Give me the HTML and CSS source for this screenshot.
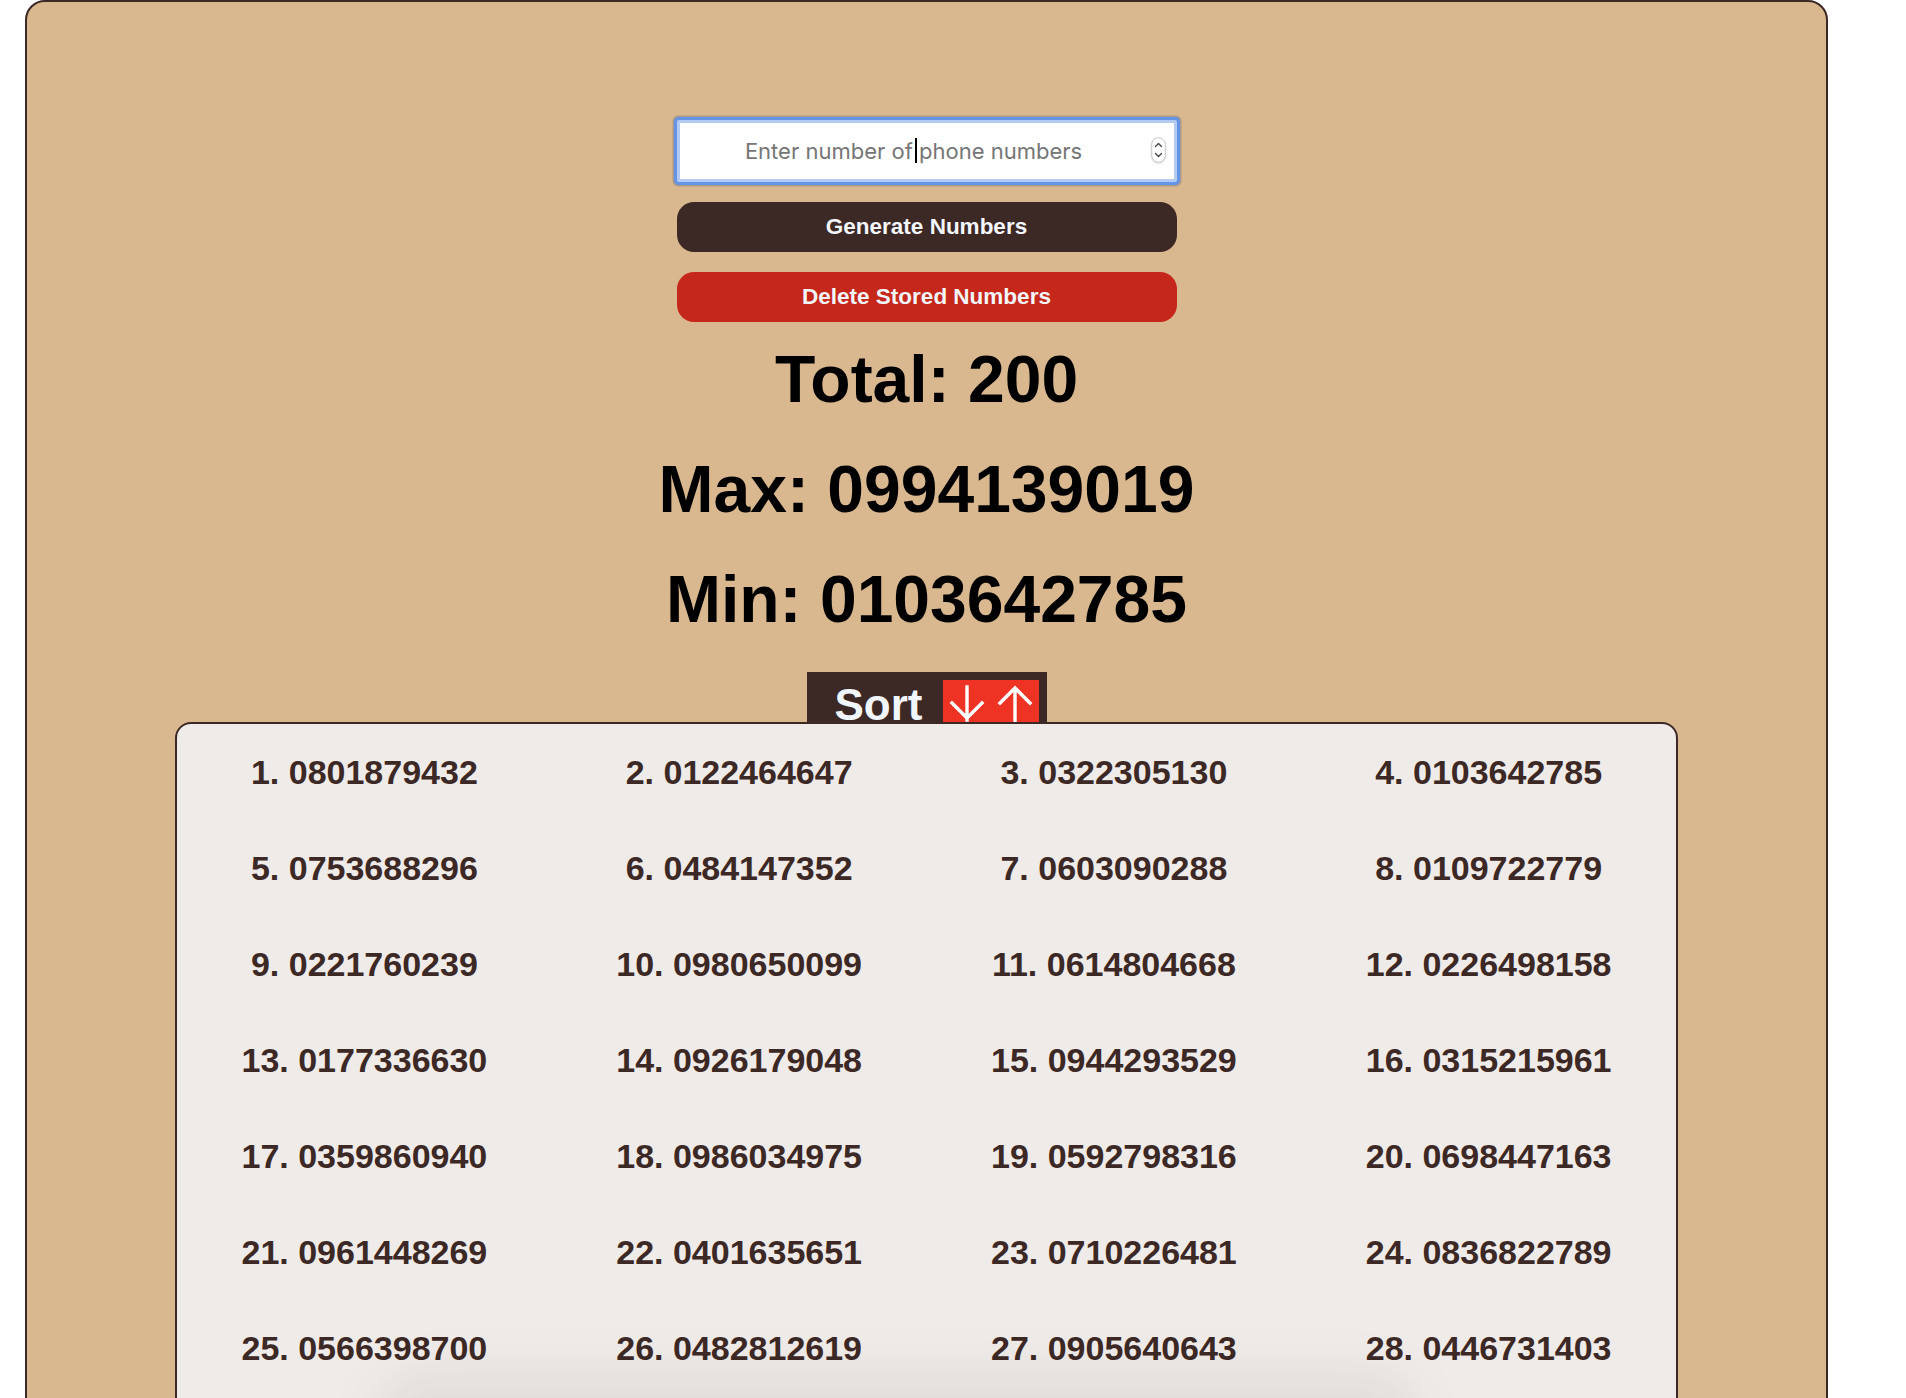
FILE: index.html
```html
<!DOCTYPE html>
<html lang="en">
<head>
<meta charset="utf-8">
<title>Phone Numbers</title>
<link rel="stylesheet" href="styles.css">
</head>
<body>
<div class="app">
  <div class="field">
    <input class="count-input" type="text" placeholder="Enter number of phone numbers">
    <span class="caret"></span>
    <span class="spinner">
      <svg width="15" height="26" viewBox="0 0 15 26">
        <rect x="0.75" y="0.75" width="13.5" height="24.5" rx="6.75" fill="#fff" stroke="#c9c9c9" stroke-width="1"/>
        <path d="M4.5 9.5 L7.5 6.5 L10.5 9.5" fill="none" stroke="#444" stroke-width="1.3" stroke-linecap="round" stroke-linejoin="round"/>
        <path d="M4.5 16.5 L7.5 19.5 L10.5 16.5" fill="none" stroke="#444" stroke-width="1.3" stroke-linecap="round" stroke-linejoin="round"/>
      </svg>
    </span>
  </div>
  <button class="btn btn-generate">Generate Numbers</button>
  <button class="btn btn-delete">Delete Stored Numbers</button>
  <div class="stats">
    <p class="stat">Total: 200</p>
    <p class="stat">Max: 0994139019</p>
    <p class="stat">Min: 0103642785</p>
  </div>
  <div class="sort-bar">
    <span class="sort-label">Sort</span>
    <span class="sort-icons">
      <svg width="96" height="42" viewBox="0 0 96 42">
        <path d="M24 7 V40 M9 23 L24 38 L39 23" fill="none" stroke="#fff" stroke-width="3.4" stroke-linecap="square"/>
        <path d="M72 9 V44 M57 23 L72 8 L87 23" fill="none" stroke="#fff" stroke-width="3.4" stroke-linecap="square"/>
      </svg>
    </span>
  </div>
  <div class="list">
    <div class="item">1. 0801879432</div>
    <div class="item">2. 0122464647</div>
    <div class="item">3. 0322305130</div>
    <div class="item">4. 0103642785</div>
    <div class="item">5. 0753688296</div>
    <div class="item">6. 0484147352</div>
    <div class="item">7. 0603090288</div>
    <div class="item">8. 0109722779</div>
    <div class="item">9. 0221760239</div>
    <div class="item">10. 0980650099</div>
    <div class="item">11. 0614804668</div>
    <div class="item">12. 0226498158</div>
    <div class="item">13. 0177336630</div>
    <div class="item">14. 0926179048</div>
    <div class="item">15. 0944293529</div>
    <div class="item">16. 0315215961</div>
    <div class="item">17. 0359860940</div>
    <div class="item">18. 0986034975</div>
    <div class="item">19. 0592798316</div>
    <div class="item">20. 0698447163</div>
    <div class="item">21. 0961448269</div>
    <div class="item">22. 0401635651</div>
    <div class="item">23. 0710226481</div>
    <div class="item">24. 0836822789</div>
    <div class="item">25. 0566398700</div>
    <div class="item">26. 0482812619</div>
    <div class="item">27. 0905640643</div>
    <div class="item">28. 0446731403</div>
    <div class="shade"></div>
  </div>
</div>
</body>
</html>
```

FILE: styles.css
```css
html, body {
  margin: 0;
  padding: 0;
  background: #ffffff;
}

body {
  font-family: "Liberation Sans", Arial, sans-serif;
}

.app {
  box-sizing: border-box;
  width: 1803px;
  margin-left: 25px;
  min-height: 1500px;
  background: #dab88f;
  border: 2px solid #3c2825;
  border-radius: 20px;
  padding-top: 118px;
  display: flex;
  flex-direction: column;
  align-items: center;
  overflow: hidden;
}

.field {
  position: relative;
  width: 500px;
  height: 62px;
}

.count-input {
  box-sizing: border-box;
  width: 500px;
  height: 62px;
  margin: 0;
  border: 3px solid #b3cbf3;
  border-radius: 2px;
  box-shadow: 0 0 0 3px #6494e6, 0 0 0 4.5px rgba(110, 115, 140, 0.45);
  background: #ffffff;
  outline: none;
  text-align: center;
  font-family: "Inter", "Noto Sans", sans-serif;
  font-size: 22px;
  color: #333;
  padding: 0 53px 0 27px;
}

.count-input::placeholder {
  color: #767676;
}

.caret {
  position: absolute;
  left: 238px;
  top: 18px;
  width: 2px;
  height: 25px;
  background: #000;
}

.spinner {
  position: absolute;
  left: 474px;
  top: 17px;
  width: 15px;
  height: 26px;
  display: block;
  filter: drop-shadow(0 1px 1px rgba(0, 0, 0, 0.15));
}

.spinner svg {
  display: block;
}

.btn {
  box-sizing: border-box;
  width: 500px;
  height: 50px;
  border: none;
  border-radius: 17px;
  font-family: "Liberation Sans", Arial, sans-serif;
  font-weight: bold;
  font-size: 22.5px;
  color: #f3f6fb;
  padding: 0;
  cursor: pointer;
}

.btn-generate {
  margin-top: 20px;
  background: #3c2825;
}

.btn-delete {
  margin-top: 20px;
  background: #c5271b;
}

.stats {
  margin-top: 2px;
  text-align: center;
}

.stat {
  margin: 0;
  font-size: 66px;
  font-weight: bold;
  line-height: 110px;
  color: #000;
}

.sort-bar {
  margin-top: 18px;
  box-sizing: border-box;
  width: 240px;
  height: 50px;
  background: #3c2825;
  display: flex;
  align-items: flex-end;
  padding-left: 28px;
  gap: 20px;
}

.sort-label {
  font-size: 44px;
  font-weight: bold;
  line-height: 34px;
  color: #f1f6fc;
}

.sort-icons {
  width: 96px;
  height: 42px;
  background: #ee3224;
  display: block;
  overflow: hidden;
}

.sort-icons svg {
  display: block;
}

.list {
  position: relative;
  box-sizing: border-box;
  width: 1503px;
  background: #efebe8;
  border: 2px solid #3c2825;
  border-radius: 16px;
  display: grid;
  grid-template-columns: repeat(4, 1fr);
  grid-auto-rows: 96px;
  padding-bottom: 120px;
}

.item {
  text-align: center;
  font-size: 34px;
  font-weight: bold;
  line-height: 96px;
  color: #3c2825;
}

.shade {
  position: absolute;
  left: 200px;
  top: 650px;
  width: 1040px;
  height: 90px;
  border-radius: 45px;
  background: rgba(60, 50, 45, 0.08);
  filter: blur(24px);
}
```
